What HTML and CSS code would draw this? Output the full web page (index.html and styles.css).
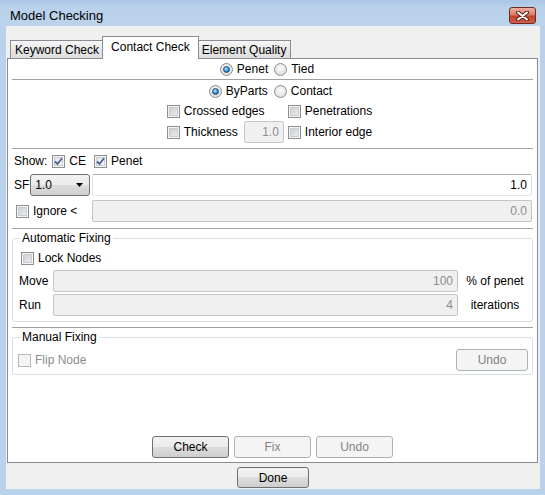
FILE: index.html
```html
<!DOCTYPE html>
<html>
	<head>
		<meta charset="UTF-8">
		<title>Model Checking</title>
		<link rel="stylesheet" href="styles.css">
	</head>
	<body>
		<div class="window">
			<div class="titleBar">
				<span class="titleText">Model Checking</span>
				<span class="closeBtn">
					<svg width="13" height="10" viewBox="0 0 13 10">
						<path d="M2 1.5 L11 8.5 M11 1.5 L2 8.5" stroke="#5a221b" stroke-width="4" stroke-linecap="round" fill="none"/>
						<path d="M2 1.5 L11 8.5 M11 1.5 L2 8.5" stroke="#fff" stroke-width="2" stroke-linecap="round" fill="none"/>
					</svg>
				</span>
			</div>
			<div class="client">
				<div class="tabBar">
					<div class="tab">Keyword Check</div>
					<div class="tab active">Contact Check</div>
					<div class="tab">Element Quality</div>
				</div>
				<div class="panel">
					<div class="radioRow typeRow">
						<span class="opt"><span class="radio on"></span>Penet</span>
						<span class="opt"><span class="radio"></span>Tied</span>
					</div>
					<div class="sep"></div>
					<div class="radioRow modeRow">
						<span class="opt"><span class="radio on"></span>ByParts</span>
						<span class="opt"><span class="radio"></span>Contact</span>
					</div>
					<div class="checkGrid">
						<span class="opt"><span class="check"></span>Crossed edges</span>
						<span class="opt"><span class="check"></span>Penetrations</span>
						<span class="opt"><span class="check"></span>Thickness<span class="field off thick">1.0</span></span>
						<span class="opt"><span class="check"></span>Interior edge</span>
					</div>
					<div class="sep sepShow"></div>
					<div class="showRow">
						<span>Show:</span>
						<span class="opt showCE"><span class="check on"><svg width="9" height="9" viewBox="0 0 9 9"><path d="M1 4.5 L3.5 7 L8 1.2" stroke="#4a5f97" stroke-width="1.8" fill="none"/></svg></span>CE</span>
						<span class="opt showPenet"><span class="check on"><svg width="9" height="9" viewBox="0 0 9 9"><path d="M1 4.5 L3.5 7 L8 1.2" stroke="#4a5f97" stroke-width="1.8" fill="none"/></svg></span>Penet</span>
					</div>
					<div class="params">
						<div class="sfCell">
							<span>SF</span>
							<span class="combo">1.0<svg width="7" height="4" viewBox="0 0 7 4"><path d="M0 0 H7 L3.5 4 Z" fill="#000"/></svg></span>
						</div>
						<span class="field">1.0</span>
						<div class="ignoreCell">
							<span class="opt"><span class="check"></span>Ignore &lt;</span>
						</div>
						<span class="field off">0.0</span>
					</div>
					<div class="sep sepAuto"></div>
					<fieldset class="group">
						<legend>Automatic Fixing</legend>
						<div class="fixBody">
							<span class="opt lockNodes"><span class="check"></span>Lock Nodes</span>
							<span>Move</span>
							<span class="field off">100</span>
							<span class="unit">% of penet</span>
							<span>Run</span>
							<span class="field off">4</span>
							<span class="unit">iterations</span>
						</div>
					</fieldset>
					<div class="sep sepManual"></div>
					<fieldset class="group">
						<legend>Manual Fixing</legend>
						<div class="manualBody">
							<span class="opt dim"><span class="check off"></span>Flip Node</span>
							<span class="btn off undoSmall">Undo</span>
						</div>
					</fieldset>
					<div class="actions">
						<span class="btn wide">Check</span>
						<span class="btn off wide">Fix</span>
						<span class="btn off wide">Undo</span>
					</div>
				</div>
				<div class="doneRow">
					<span class="btn done">Done</span>
				</div>
			</div>
		</div>
	</body>
</html>
```

FILE: styles.css
```css
*,
*::before,
*::after{
	box-sizing: border-box;
}
body{
	margin: 0;
	font-family: "Liberation Sans", Arial, sans-serif;
	font-size: 12px;
	color: #000;
}
.window{
	width: 545px;
	height: 495px;
	background: #b9d1ea;
	display: flex;
	flex-direction: column;
}
.titleBar{
	height: 26px;
	flex: none;
	display: flex;
	align-items: flex-start;
	background: linear-gradient(#aac6e6, #b9d1ea 8px, #bcd3ec);
}
.titleText{
	margin: 8px 0 0 10px;
	font-size: 13px;
	line-height: 16px;
}
.closeBtn{
	margin: 7px 9px 0 auto;
	width: 27px;
	height: 17px;
	border: 1px solid #6d2b24;
	border-radius: 3px;
	background: linear-gradient(#eeb1a3, #dc7d68 45%, #c64128 55%, #d0614a);
	display: flex;
	align-items: center;
	justify-content: center;
}
.client{
	margin: 0 5px 0 6px;
	height: 463px;
	background: #f0f0f0;
	display: flex;
	flex-direction: column;
}
.tabBar{
	height: 33px;
	flex: none;
	display: flex;
	align-items: flex-end;
	padding-left: 4px;
}
.tab{
	height: 19px;
	padding: 0 4px;
	border: 1px solid #898c95;
	border-bottom: none;
	background: linear-gradient(#f6f6f6, #e8e8e8 45%, #dcdcdc);
	line-height: 18px;
	white-space: nowrap;
}
.tab.active{
	height: 23px;
	margin: 0 -2px;
	padding: 0 8px;
	background: #fff;
	line-height: 21px;
	position: relative;
	z-index: 1;
}
.panel{
	height: 405px;
	flex: none;
	margin: -1px 2px 0 1px;
	border: 1px solid #898c95;
	background: #fff;
	display: flex;
	flex-direction: column;
}
.sep{
	height: 1px;
	flex: none;
	background: #a0a0a0;
	margin: 0 4px;
}
.opt{
	display: flex;
	align-items: center;
	gap: 4px;
	white-space: nowrap;
}
.radio{
	width: 13px;
	height: 13px;
	flex: none;
	border-radius: 50%;
	border: 1px solid #8b8d91;
	background: radial-gradient(circle at 50% 40%, #fdfdfd, #d6d6d6);
	display: flex;
	align-items: center;
	justify-content: center;
}
.radio.on::after{
	content: "";
	width: 7px;
	height: 7px;
	border-radius: 50%;
	border: 1px solid #1c4a78;
	background: radial-gradient(circle at 40% 35%, #c2ebff, #2f90d6 55%, #0d4f86);
}
.check{
	width: 13px;
	height: 13px;
	flex: none;
	border: 1px solid #8e8f8f;
	background: linear-gradient(135deg, #c4c8ce, #f2f2f2);
	box-shadow: inset 0 0 0 1px #f4f4f4, inset 0 0 0 2px #c9ccd1;
	display: flex;
	align-items: center;
	justify-content: center;
}
.check.on{
	background: linear-gradient(135deg, #dfe2e6, #fbfbfb);
}
.check.off{
	border-color: #b8b8b8;
	background: #f4f4f4;
	box-shadow: none;
}
.radioRow{
	display: flex;
	justify-content: center;
	align-items: center;
	gap: 6px;
}
.typeRow{
	height: 20px;
	padding-right: 11px;
}
.modeRow{
	height: 22px;
	padding-right: 4px;
}
.checkGrid{
	display: grid;
	grid-template-columns: auto auto;
	grid-template-rows: 18px 22px;
	justify-content: center;
	column-gap: 4px;
	row-gap: 1px;
	padding-right: 6px;
}
.field{
	height: 22px;
	border: 1px solid #abadb3;
	border-color: #abadb3 #dbdfe6 #e3e9ef #e2e3ea;
	border-radius: 2px;
	background: #fff;
	text-align: right;
	padding: 0 4px;
	line-height: 20px;
}
.field.off{
	background: #f0f0f0;
	border-color: #c5c5c5;
	color: #8d8d8d;
}
.field.thick{
	width: 40px;
	margin-left: 2px;
}
.sepShow{
	margin-top: 5px;
}
.showRow{
	height: 24px;
	display: flex;
	align-items: center;
	padding-left: 6px;
}
.showCE{
	margin-left: 5px;
}
.showPenet{
	margin-left: 8px;
}
.params{
	display: grid;
	grid-template-columns: 78px 1fr;
	grid-auto-rows: 22px;
	row-gap: 4px;
	padding: 0 5px 0 6px;
	margin-top: 1px;
}
.sfCell,
.ignoreCell{
	display: flex;
	align-items: center;
}
.sfCell .combo{
	margin-left: 1px;
}
.ignoreCell .opt{
	margin-left: 2px;
}
.combo{
	width: 60px;
	height: 22px;
	border: 1px solid #707070;
	border-radius: 3px;
	background: linear-gradient(#f2f2f2, #ebebeb 50%, #dddddd 50%, #cfcfcf);
	display: flex;
	align-items: center;
	justify-content: space-between;
	padding: 0 6px 0 4px;
}
.sepAuto{
	margin-top: 6px;
}
.group{
	margin: 2px 4px 0;
	padding: 0;
	border: 1px solid #d5dfe5;
	border-radius: 3px;
	min-width: 0;
}
.group legend{
	margin-left: 7px;
	padding: 0 2px;
	line-height: 14px;
}
.fixBody{
	display: grid;
	grid-template-columns: 34px 1fr 74px;
	grid-template-rows: 20px 22px 22px;
	row-gap: 2px;
	align-items: center;
	padding: 3px 0 5px 6px;
}
.lockNodes{
	grid-column: 1 / 4;
	margin-left: 2px;
}
.unit{
	text-align: center;
}
.sepManual{
	margin-top: 5px;
}
.manualBody{
	height: 22px;
	display: flex;
	align-items: center;
	justify-content: space-between;
	margin: 5px 4px 3px 5px;
}
.dim{
	color: #8d8d8d;
}
.btn{
	height: 22px;
	border: 1px solid #707070;
	border-radius: 3px;
	background: linear-gradient(#f2f2f2, #ebebeb 50%, #dddddd 50%, #cfcfcf);
	display: flex;
	align-items: center;
	justify-content: center;
}
.btn.off{
	border-color: #adb2b5;
	background: #f4f4f4;
	color: #838383;
}
.undoSmall{
	width: 72px;
}
.actions{
	margin-top: auto;
	margin-bottom: 4px;
	display: flex;
	justify-content: center;
	gap: 5px;
}
.btn.wide{
	width: 77px;
}
.doneRow{
	height: 26px;
	display: flex;
	justify-content: center;
	padding-top: 4px;
}
.btn.done{
	width: 72px;
	height: 21px;
}
```
